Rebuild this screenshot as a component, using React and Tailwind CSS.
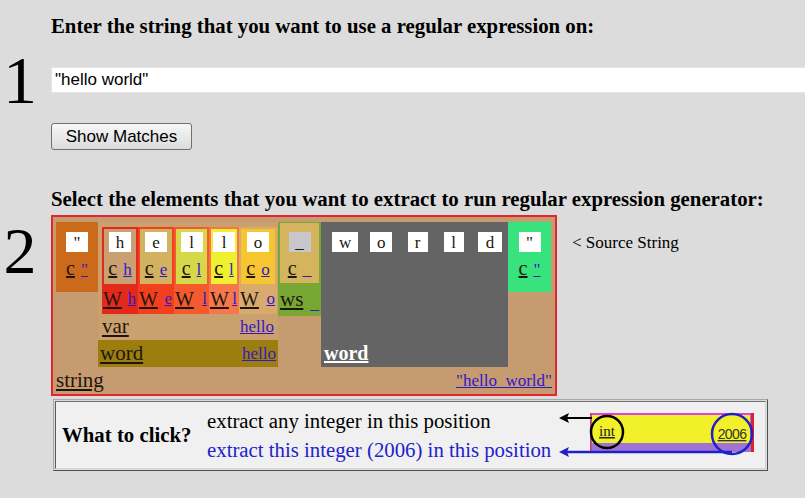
import React from "react";

const hello = [
	{ ch: "h", w: "w-[36px]", wc: "bg-[#e32a1a]", cc: "bg-[#c9a072]" },
	{ ch: "e", w: "w-[36px]", wc: "bg-[#f2401e]", cc: "bg-[#d2b25e]" },
	{ ch: "l", w: "w-[35px]", wc: "bg-[#f45a2e]", cc: "bg-[#d6d84a]" },
	{ ch: "l", w: "w-[30px]", wc: "bg-[#f6784a]", cc: "bg-[#eef030]" },
	{ ch: "o", w: "w-[38px]", wc: "bg-[#d8aa6c]", cc: "bg-[#f5c630]" },
];

const world = [
	{ ch: "w", w: "w-[26px]" },
	{ ch: "o", w: "w-[22px]" },
	{ ch: "r", w: "w-[20px]" },
	{ ch: "l", w: "w-[20px]" },
	{ ch: "d", w: "w-[24px]" },
];

function CharBox({ ch, gray, w = "w-[22px]" }) {
	return (
		<div
			className={`flex h-[20px] ${w} items-center justify-center text-[17px] leading-none ${
				gray ? "bg-[#c7c7cd]" : "bg-white"
			}`}>
			{ch}
		</div>
	);
}

function CLabel({ ch }) {
	return (
		<div className="mt-[5px] flex items-baseline gap-[6px] leading-[22px]">
			<span className="text-[20px] underline">c</span>
			<span className="text-[17px] text-[#3418c8] underline">{ch}</span>
		</div>
	);
}

function Arrows() {
	return (
		<svg width="205" height="56" viewBox="0 0 205 56">
			<rect x="34" y="6" width="163" height="39" fill="#9f72d6" />
			<rect x="34" y="6" width="163" height="2" fill="#e040e8" />
			<rect x="36" y="8" width="158" height="28" fill="#f2f028" />
			<rect x="34" y="6" width="1.5" height="39" fill="#c04070" />
			<rect x="195" y="6" width="3" height="39" fill="#e02030" />
			<line x1="10" y1="11" x2="36" y2="11" stroke="#000" strokeWidth="2" />
			<polygon points="3,11 13,6 11,11 13,16" fill="#000" />
			<line x1="10" y1="45" x2="176" y2="45" stroke="#2020c8" strokeWidth="2.5" />
			<polygon points="3,45 13,40 11,45 13,50" fill="#2020c8" />
			<circle cx="51" cy="25" r="16" fill="none" stroke="#000" strokeWidth="2.5" />
			<text
				x="51"
				y="29"
				textAnchor="middle"
				fontSize="15"
				fontFamily="Liberation Serif, serif"
				textDecoration="underline"
				fill="#222">
				int
			</text>
			<circle cx="176" cy="27" r="20" fill="none" stroke="#2020c8" strokeWidth="2.5" />
			<text
				x="176"
				y="32"
				textAnchor="middle"
				fontSize="14"
				fontFamily="Liberation Sans, sans-serif"
				letterSpacing="-0.6"
				textDecoration="underline"
				fill="#333">
				2006
			</text>
		</svg>
	);
}

function App() {
	return (
		<div className="min-h-[498px] w-full overflow-hidden bg-[#dcdcdc] font-['Liberation_Serif',serif] text-black">
			<div className="grid grid-cols-[51px_1fr]">
				{/* step 1 */}
				<div />
				<h3 className="whitespace-nowrap pt-[14px] text-[20.8px] font-bold leading-[24px]">
					Enter the string that you want to use a regular expression on:
				</h3>
				<div className="mt-[29px] flex h-[26px] w-[40px] items-center justify-center">
					<span className="text-[68px] leading-none">1</span>
				</div>
				<div className="mt-[29px]">
					<input
						readOnly
						defaultValue={'"hello world"'}
						className="h-[26px] w-[780px] border border-[#e4e4e4] bg-white pl-[3px] font-['Liberation_Sans',sans-serif] text-[17px] text-black outline-none"
					/>
					<button className="mt-[30px] block h-[27px] w-[141px] rounded-[3px] border border-[#707070] bg-gradient-to-b from-[#f7f7f7] to-[#dcdcdc] font-['Liberation_Sans',sans-serif] text-[17px] text-black">
						Show Matches
					</button>
				</div>

				{/* step 2 */}
				<div />
				<h3 className="mt-[37px] whitespace-nowrap text-[20.8px] font-bold leading-[24px]">
					Select the elements that you want to extract to run regular expression generator:
				</h3>
				<div className="flex w-[40px] justify-center pt-[7px]">
					<span className="text-[66px] leading-none">2</span>
				</div>
				<div className="mt-[4px]">
					<div className="flex items-start">
						<div className="w-[506px] border-2 border-[#e2252e] bg-[#c59b6f] text-[#1d160c]">
							<div className="flex items-start px-[3px] pt-[5px]">
								<div className="flex h-[70px] w-[42px] flex-col items-center bg-[#cc6a1c] pt-[10px]">
									<CharBox ch={'"'} />
									<CLabel ch={'"'} />
								</div>

								<div className="flex w-[180px] flex-col bg-[#9b7e0e]">
									<div className="bg-[#c9a06e] pl-[4px] pr-[1px] pt-[5px]">
										<div className="flex">
											{hello.map((c, i) => (
												<div key={i} className={`flex ${c.w} flex-col ${c.wc}`}>
													<div
														className={`mx-[2px] mt-[2px] flex h-[55px] flex-col items-center pt-[3px] ${c.cc}`}>
														<CharBox ch={c.ch} />
														<CLabel ch={c.ch} />
													</div>
													<div className="flex h-[30px] items-center justify-between pl-[1px] pr-[2px]">
														<span className="text-[20px] underline">W</span>
														<span className="text-[17px] text-[#3418c8] underline">{c.ch}</span>
													</div>
												</div>
											))}
										</div>
										<div className="flex h-[26px] items-center justify-between pr-[3px]">
											<span className="text-[21px] underline">var</span>
											<span className="text-[17px] text-[#3418c8] underline">hello</span>
										</div>
									</div>
									<div className="flex h-[27px] items-center justify-between px-[2px]">
										<span className="text-[21px] underline">word</span>
										<span className="text-[17px] text-[#3418c8] underline">hello</span>
									</div>
								</div>

								<div className="flex h-[94px] w-[43px] flex-col bg-[#78a833]">
									<div className="mx-[2px] mt-[1px] flex h-[66px] flex-col items-center bg-[#d4b45e] pt-[9px]">
										<CharBox ch="_" gray />
										<CLabel ch="_" />
									</div>
									<div className="flex flex-1 items-center justify-between px-[2px]">
										<span className="text-[21px] leading-none underline">ws</span>
										<span className="mt-[8px] text-[17px] text-[#3418c8] underline">_</span>
									</div>
								</div>

								<div className="flex h-[145px] w-[187px] flex-col justify-between bg-[#646464]">
									<div className="flex pl-[6px] pt-[10px]">
										{world.map((c, i) => (
											<div key={i} className="flex w-[37px] justify-center">
												<CharBox ch={c.ch} w={c.w} />
											</div>
										))}
									</div>
									<span className="pb-[3px] pl-[3px] text-[20px] font-bold leading-[22px] text-white underline">
										word
									</span>
								</div>

								<div className="flex h-[70px] w-[43px] flex-col items-center bg-[#38e27c] pt-[10px]">
									<CharBox ch={'"'} />
									<CLabel ch={'"'} />
								</div>
							</div>
							<div className="flex h-[27px] items-center justify-between px-[3px]">
								<span className="text-[21px] underline">string</span>
								<span className="text-[17px] text-[#3418c8] underline">"hello_world"</span>
							</div>
						</div>
						<span className="ml-[15px] mt-[19px] text-[17px] leading-[18px]">&lt; Source String</span>
					</div>

					<div className="ml-[2px] mt-[3px] w-[715px] border border-b-[#505050] border-l-[#a8a8a8] border-r-[#505050] border-t-[#a8a8a8] p-[1px]">
						<div className="flex h-[68px] items-center border border-b-[#d4d4d4] border-l-[#5a5a5a] border-r-[#d4d4d4] border-t-[#707070] bg-[#f0f0f0]">
							<div className="w-[151px] pl-[6px] text-[20.8px] font-bold">What to click?</div>
							<div className="w-[349px] whitespace-nowrap text-[20.8px] leading-[29px]">
								<div>extract any integer in this position</div>
								<div className="text-[#2222cc]">extract this integer (2006) in this position</div>
							</div>
							<Arrows />
						</div>
					</div>
				</div>
			</div>
		</div>
	);
}

export default App;
